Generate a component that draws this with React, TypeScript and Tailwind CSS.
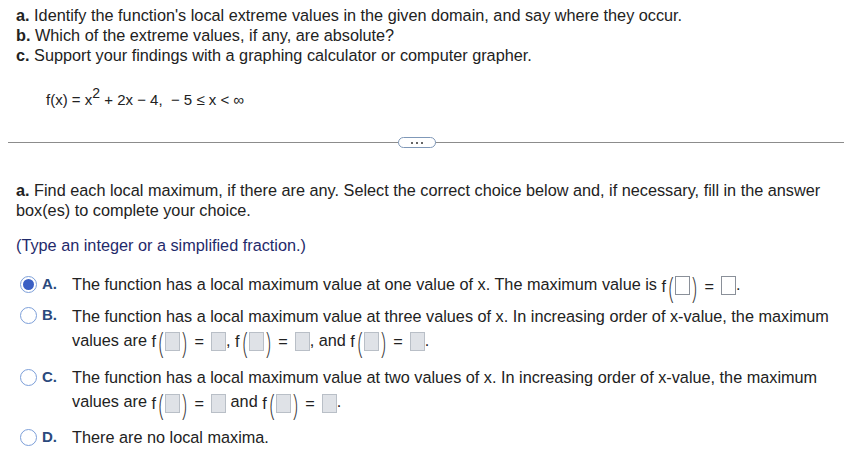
import React from "react";

const Box = ({ gray }: { gray?: boolean }) => (
  <span
    className={
      "inline-block align-middle w-[15px] h-[19px] border " +
      (gray ? "bg-[#dfe2e7] border-[#b9bfc7]" : "bg-white border-[#8a9099]")
    }
  />
);

const FParen = ({ gray }: { gray?: boolean }) => (
  <span className="inline-flex items-center align-middle">
    <span>f</span>
    <span className="text-[23px] leading-[20px] font-light ml-[2px] mr-[1px] scale-y-[1.3] scale-x-[0.8] inline-block text-[#333]" style={{ fontFamily: '"Open Sans", sans-serif' }}>(</span>
    <Box gray={gray} />
    <span className="text-[23px] leading-[20px] font-light ml-[1px] inline-block scale-y-[1.3] scale-x-[0.8] text-[#333]" style={{ fontFamily: '"Open Sans", sans-serif' }}>)</span>
    <span className="mx-[7px]">=</span>
    <Box gray={gray} />
  </span>
);

const Radio = ({ checked }: { checked?: boolean }) => (
  <span className="inline-flex items-center justify-center w-[17px] h-[17px] rounded-full border-[1.5px] border-[#7d9fd9] bg-white">
    {checked && <span className="w-[11px] h-[11px] rounded-full bg-[#3a5fc4]" />}
  </span>
);

const Choice = ({
  letter,
  checked,
  children,
  className,
}: {
  letter: string;
  checked?: boolean;
  children: React.ReactNode;
  className?: string;
}) => (
  <div className={"flex items-start " + (className || "")}>
    <div className="flex items-center w-[56px] shrink-0 pl-[4px] h-[24px]">
      <Radio checked={checked} />
      <span className="ml-[5px] font-bold text-[#2b4a7d] text-[15px]">{letter}.</span>
    </div>
    <div className="leading-[24px]">{children}</div>
  </div>
);

export default function App() {
  return (
    <div
      className="w-[844px] h-[452px] bg-white text-[#222] text-[16.25px] overflow-hidden"
      style={{ fontFamily: '"Liberation Sans", Arial, sans-serif' }}
    >
      <div className="pl-[16px] pt-[5px] leading-[20px]">
        <div>
          <b>a.</b> Identify the function's local extreme values in the given domain, and say where they occur.
        </div>
        <div>
          <b>b.</b> Which of the extreme values, if any, are absolute?
        </div>
        <div>
          <b>c.</b> Support your findings with a graphing calculator or computer grapher.
        </div>
        <div className="mt-[25px] pl-[30px] text-[15px]">
          f(x) = x<span className="text-[14px] relative top-[-7px]">2</span> + 2x − 4,&nbsp; − 5 ≤ x &lt; ∞
        </div>
      </div>

      <div className="relative mt-[27px] ml-[8px] h-[10px] flex items-center">
        <div className="flex-1 h-[1px] bg-[#8c8c8c]" />
        <div className="absolute left-[390px] top-0 w-[38px] h-[11px] rounded-full border border-[#7f98b8] bg-white flex items-center justify-center gap-[3px]">
          <span className="w-[2px] h-[2px] bg-[#333] rounded-full" />
          <span className="w-[2px] h-[2px] bg-[#333] rounded-full" />
          <span className="w-[2px] h-[2px] bg-[#333] rounded-full" />
        </div>
      </div>

      <div className="pl-[16px] mt-[33px] leading-[20px] pr-[10px]">
        <div>
          <b>a.</b> Find each local maximum, if there are any. Select the correct choice below and, if necessary, fill in the answer box(es) to complete your choice.
        </div>
        <div className="mt-[15px] text-[#1f2a6b]">(Type an integer or a simplified fraction.)</div>
      </div>

      <div className="pl-[16px] pr-[6px]">
        <Choice letter="A" checked className="mt-[17px]">
          The function has a local maximum value at one value of x. The maximum value is <FParen />.
        </Choice>
        <Choice letter="B" className="mt-[6px]">
          <div>The function has a local maximum value at three values of x. In increasing order of x-value, the maximum</div>
          <div>
            values are <FParen gray />, <FParen gray />, and <FParen gray />.
          </div>
        </Choice>
        <Choice letter="C" className="mt-[12px]">
          <div>The function has a local maximum value at two values of x. In increasing order of x-value, the maximum</div>
          <div>
            values are <FParen gray /> and <FParen gray />.
          </div>
        </Choice>
        <Choice letter="D" className="mt-[10px]">
          There are no local maxima.
        </Choice>
      </div>
    </div>
  );
}
